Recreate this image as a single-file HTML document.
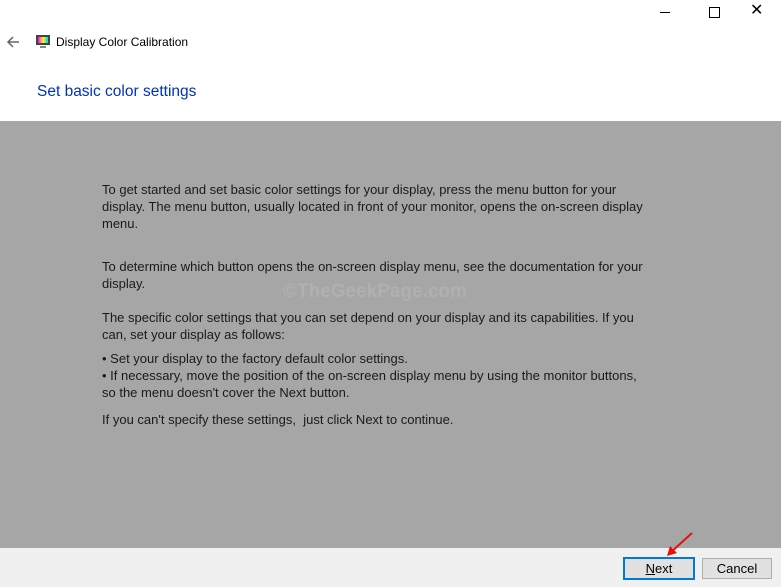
<!DOCTYPE html>
<html><head><style>
body{margin:0;width:781px;height:587px;background:#fff;font-family:"Liberation Sans",sans-serif;position:relative;overflow:hidden}
.a{position:absolute}
.p{position:absolute;left:102px;font-size:13px;color:#1a1a1a;line-height:17px;width:560px}
.btn{position:absolute;top:558px;height:19px;width:68px;background:#e1e1e1;border:1px solid #adadad;font-size:13px;text-align:center;line-height:19px;color:#000}
</style></head><body>
<div class="a" style="left:660px;top:12px;width:10px;height:1px;background:#000"></div>
<div class="a" style="left:709px;top:7px;width:9px;height:9px;border:1px solid #000"></div>
<div class="a" style="left:750px;top:0px;font-size:16px;color:#000">✕</div>
<svg class="a" style="left:6px;top:36px" width="14" height="12"><path d="M13 6H2M7 1L2 6l5 5" stroke="#666" stroke-width="1.5" fill="none"/></svg>
<svg class="a" style="left:35px;top:34px" width="16" height="16"><rect x="1" y="1" width="14" height="10" fill="#444"/><rect x="3" y="3" width="10" height="6" fill="url(#g)"/><defs><linearGradient id="g"><stop offset="0" stop-color="#f0f"/><stop offset=".5" stop-color="#ff0"/><stop offset="1" stop-color="#0cf"/></linearGradient></defs><rect x="5" y="12" width="6" height="2" fill="#888"/></svg>
<div class="a" style="left:56px;top:35px;font-size:12px;color:#000">Display Color Calibration</div>
<div class="a" style="left:37px;top:83px;font-size:15.5px;color:#0033bb">Set basic color settings</div>
<div class="a" style="left:0;top:121px;width:781px;height:427px;background:#a6a6a6"></div>
<div class="a" style="left:0;top:548px;width:781px;height:39px;background:#f0f0f0"></div>
<div class="a" style="left:283px;top:281px;font-size:19px;font-weight:bold;color:#b0b0b0">©TheGeekPage.com</div>
<div class="p" style="top:181px">To get started and set basic color settings for your display, press the menu button for your<br>display. The menu button, usually located in front of your monitor, opens the on-screen display<br>menu.</div>
<div class="p" style="top:258px">To determine which button opens the on-screen display menu, see the documentation for your<br>display.</div>
<div class="p" style="top:309px">The specific color settings that you can set depend on your display and its capabilities. If you<br>can, set your display as follows:</div>
<div class="p" style="top:350px">• Set your display to the factory default color settings.<br>• If necessary, move the position of the on-screen display menu by using the monitor buttons,<br>so the menu doesn't cover the Next button.</div>
<div class="p" style="top:411px">If you can't specify these settings,&nbsp; just click Next to continue.</div>
<div class="btn" style="left:623px;border:2px solid #0078d7;top:557px"><u>N</u>ext</div>
<div class="btn" style="left:702px">Cancel</div>
<svg class="a" style="left:665px;top:531px" width="30" height="26"><path d="M27 2L5 22" stroke="#e31010" stroke-width="2" fill="none"/><path d="M2 25l3-10 7 7z" fill="#e31010"/></svg>
</body></html>
